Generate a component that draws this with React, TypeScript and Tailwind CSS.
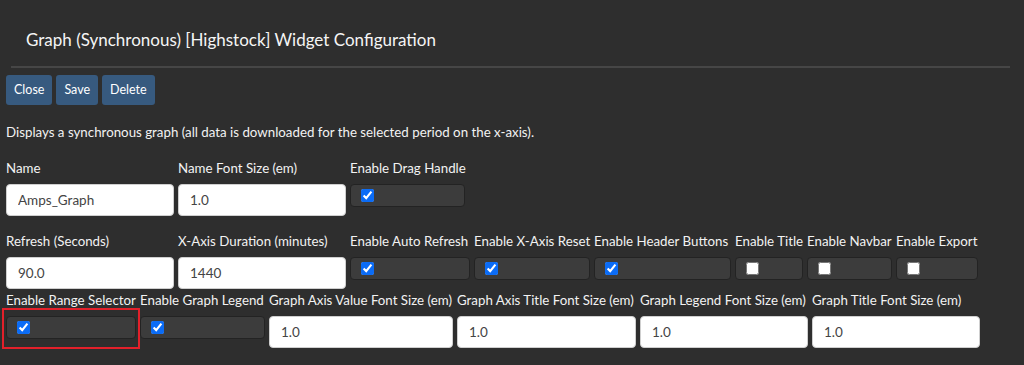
import React from 'react'

const font = { fontFamily: 'Lato, "Open Sans", sans-serif' }

function TextField({ label, value, w }: { label: string; value: string; w: string }) {
  return (
    <div className={`flex shrink-0 flex-col ${w}`}>
      <label className="h-[20px] whitespace-nowrap text-[13.3px] leading-[20px] text-[#f2f2f2]">{label}</label>
      <input
        readOnly
        value={value}
        size={1}
        className="mt-[6px] h-[32px] w-full min-w-0 rounded-[4px] border border-[#cfcfcf] bg-white px-[11px] text-[13.5px] text-[#444] outline-none"
        style={font}
      />
    </div>
  )
}

function CheckField({
  label,
  checked,
  w,
  marked,
}: {
  label: string
  checked: boolean
  w: string
  marked?: boolean
}) {
  return (
    <div className={`flex shrink-0 flex-col ${w}`}>
      <label className="h-[20px] whitespace-nowrap text-[13.3px] leading-[20px] text-[#f2f2f2]">{label}</label>
      <div className="relative mt-[6px]">
        <div className="flex h-[23px] items-center rounded-[4px] border border-[#232323] bg-[#3c3c3c] pl-[10px]">
          <input
            type="checkbox"
            readOnly
            checked={checked}
            className="m-0 h-[13px] w-[13px] accent-[#0b6cf6]"
          />
        </div>
        {marked && (
          <div className="pointer-events-none absolute -top-[8px] -right-[4px] -bottom-[10px] -left-[4px] border-2 border-[#e3202a]" />
        )}
      </div>
    </div>
  )
}

export default function App() {
  return (
    <div className="h-[365px] w-[1024px] overflow-hidden bg-[#2e2e2e] text-[#f2f2f2]" style={font}>
      <div className="px-[26px] pt-[29px] text-[17px] leading-[22px] text-[#f5f5f5]">
        Graph (Synchronous) [Highstock] Widget Configuration
      </div>
      <div className="mt-[15px] mr-[14px] ml-[11px] h-[2px] bg-[#464646]" />
      <div className="mt-[7px] flex gap-[4px] px-[6px]">
        {['Close', 'Save', 'Delete'].map((b) => (
          <button
            key={b}
            className="h-[30px] rounded-[3px] bg-[#375a7f] px-[8px] text-[12.5px] text-white"
            style={font}
          >
            {b}
          </button>
        ))}
      </div>
      <p className="mt-[18px] px-[6px] text-[13.3px] leading-[18px] text-[#f2f2f2]">
        Displays a synchronous graph (all data is downloaded for the selected period on the x-axis).
      </p>

      <div className="mt-[17px] flex gap-[4px] px-[6px]">
        <TextField label="Name" value="Amps_Graph" w="w-[168px]" />
        <TextField label="Name Font Size (em)" value="1.0" w="w-[168px]" />
        <CheckField label="Enable Drag Handle" checked w="w-[115px]" />
      </div>

      <div className="mt-[15px] flex items-start gap-[4px] px-[6px]">
        <TextField label="Refresh (Seconds)" value="90.0" w="w-[168px]" />
        <TextField label="X-Axis Duration (minutes)" value="1440" w="w-[168px]" />
        <CheckField label="Enable Auto Refresh" checked w="w-[120px]" />
        <CheckField label="Enable X-Axis Reset" checked w="w-[116px]" />
        <CheckField label="Enable Header Buttons" checked w="w-[137px]" />
        <CheckField label="Enable Title" checked={false} w="w-[68px]" />
        <CheckField label="Enable Navbar" checked={false} w="w-[85px]" />
        <CheckField label="Enable Export" checked={false} w="w-[82px]" />
      </div>

      <div className="mt-[1px] flex items-start gap-[4px] px-[6px]">
        <CheckField label="Enable Range Selector" checked marked w="w-[130px]" />
        <CheckField label="Enable Graph Legend" checked w="w-[125px]" />
        <TextField label="Graph Axis Value Font Size (em)" value="1.0" w="w-[184px]" />
        <TextField label="Graph Axis Title Font Size (em)" value="1.0" w="w-[179px]" />
        <TextField label="Graph Legend Font Size (em)" value="1.0" w="w-[168px]" />
        <TextField label="Graph Title Font Size (em)" value="1.0" w="w-[168px]" />
      </div>
    </div>
  )
}
